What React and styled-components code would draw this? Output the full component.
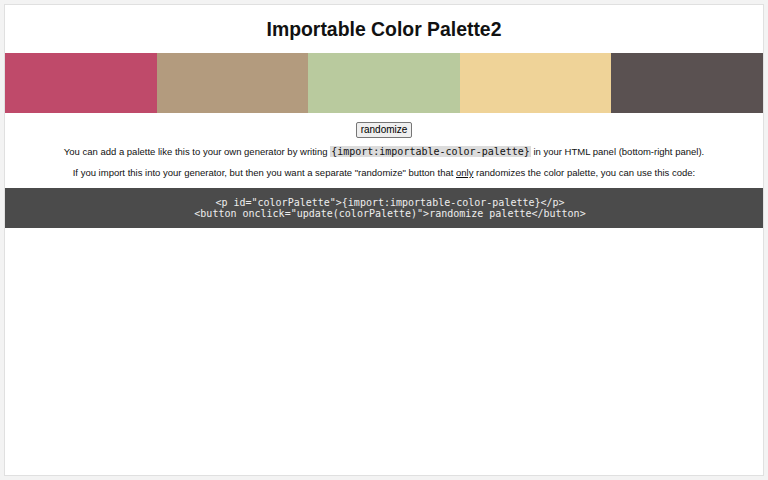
import React from "react";
import styled, { createGlobalStyle } from "styled-components";

const GlobalStyle = createGlobalStyle`
  html, body {
    margin: 0;
    padding: 0;
    background: #f3f3f3;
    font-family: "Liberation Sans", Arial, sans-serif;
  }
`;

const palette = ["#bf4a6a", "#b39b7e", "#b9ca9e", "#efd398", "#5a5151"];

const Page = styled.div`
  padding: 4px;
  height: 480px;
  box-sizing: border-box;
`;

const Card = styled.div`
  background: #ffffff;
  border: 1px solid #e0e0e0;
  height: 100%;
  box-sizing: border-box;
`;

const Title = styled.h1`
  margin: 0;
  padding: 13px 0 0;
  height: 48px;
  box-sizing: border-box;
  text-align: center;
  font-size: 19.4px;
  font-weight: bold;
  color: #111;
`;

const Swatches = styled.div`
  display: grid;
  grid-template-columns: repeat(5, 1fr);
  height: 60px;
`;

const Swatch = styled.div`
  background: ${(p) => p.color};
`;

const Controls = styled.div`
  text-align: center;
  padding-top: 9px;
  line-height: 0;
`;

const RandomButton = styled.button`
  font-family: "Liberation Sans", Arial, sans-serif;
  font-size: 10px;
  line-height: 12px;
  padding: 1px 4px;
  background: #efefef;
  border: 1px solid #767676;
  border-radius: 2px;
  color: #000;
`;

const Note = styled.p`
  margin: ${(p) => p.top}px 0 0;
  text-align: center;
  font-size: 9.5px;
  line-height: 13px;
  color: #111;
`;

const InlineCode = styled.code`
  font-family: "DejaVu Sans Mono", monospace;
  font-size: 10px;
  background: #dcdcdc;
  padding: 0 1px;
`;

const CodeBlock = styled.pre`
  margin: 9px 0 0;
  background: #4b4b4b;
  color: #eeeeee;
  font-family: "DejaVu Sans Mono", monospace;
  font-size: 10px;
  line-height: 11px;
  text-align: center;
  padding: 9px 0 9px 12px;
  white-space: pre;
`;

export default function App() {
  return (
    <>
      <GlobalStyle />
      <Page>
        <Card>
          <Title>Importable Color Palette2</Title>
          <Swatches>
            {palette.map((c) => (
              <Swatch key={c} color={c} />
            ))}
          </Swatches>
          <Controls>
            <RandomButton>randomize</RandomButton>
          </Controls>
          <Note top={7}>
            You can add a palette like this to your own generator by writing{" "}
            <InlineCode>{"{import:importable-color-palette}"}</InlineCode> in your HTML panel
            (bottom-right panel).
          </Note>
          <Note top={8}>
            If you import this into your generator, but then you want a separate "randomize" button
            that <u>only</u> randomizes the color palette, you can use this code:
          </Note>
          <CodeBlock>
            {'<p id="colorPalette">{import:importable-color-palette}</p>\n<button onclick="update(colorPalette)">randomize palette</button>'}
          </CodeBlock>
        </Card>
      </Page>
    </>
  );
}
